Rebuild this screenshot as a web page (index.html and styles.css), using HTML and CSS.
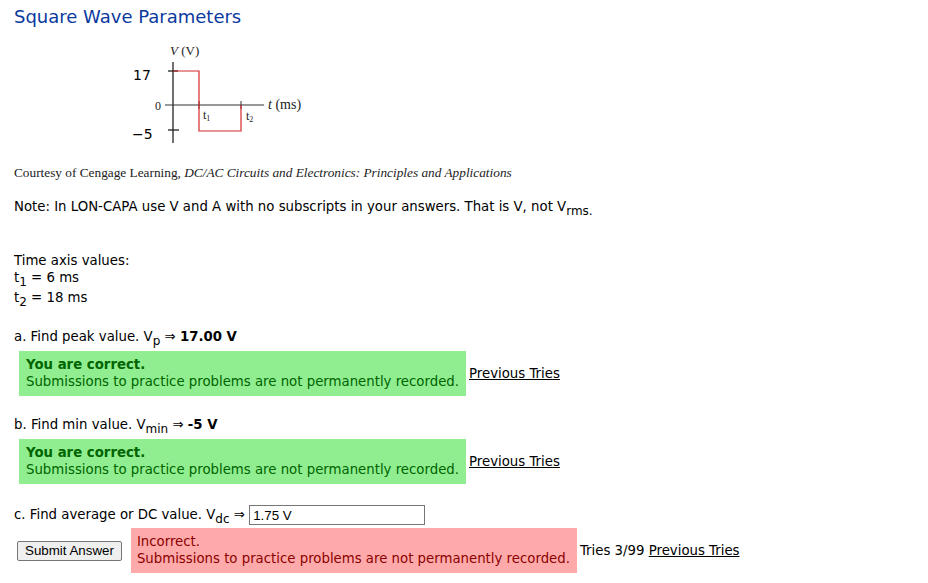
FILE: index.html
```html
<!DOCTYPE html>
<html>
<head>
<meta charset="utf-8">
<title>Square Wave Parameters</title>
<link rel="stylesheet" href="styles.css">
</head>
<body>
<h1 class="title">Square Wave Parameters</h1>
<svg class="figure" width="200" height="104" viewBox="0 0 200 104" xmlns="http://www.w3.org/2000/svg">
  <text class="serif" x="50" y="13" font-size="13"><tspan font-style="italic">V</tspan> (V)</text>
  <text class="lab" x="13" y="38">17</text>
  <text class="lab" x="12" y="97">−5</text>
  <text class="serif" x="35" y="68" font-size="12">0</text>
  <line x1="53" y1="20" x2="53" y2="101" stroke="#111" stroke-width="1.2"/>
  <line x1="48" y1="29" x2="58" y2="29" stroke="#111" stroke-width="1.2"/>
  <line x1="48" y1="88" x2="59" y2="88" stroke="#111" stroke-width="1.2"/>
  <line x1="45" y1="63" x2="144" y2="63" stroke="#333" stroke-width="1.2"/>
  <line x1="79" y1="59" x2="79" y2="67" stroke="#333" stroke-width="1"/>
  <line x1="121" y1="59" x2="121" y2="67" stroke="#333" stroke-width="1"/>
  <polyline points="53,29 79,29 79,89 121,89 121,63" fill="none" stroke="#d42a2a" stroke-width="1.2"/>
  <text class="serif" x="83" y="77" font-size="12">t<tspan font-size="8" dy="2">1</tspan></text>
  <text class="serif" x="126" y="78" font-size="12">t<tspan font-size="8" dy="2">2</tspan></text>
  <text class="serif" x="148" y="67" font-size="14"><tspan font-style="italic">t</tspan> (ms)</text>
</svg>
<p class="courtesy">Courtesy of Cengage Learning, <i>DC/AC Circuits and Electronics: Principles and Applications</i></p>
<p class="note">Note: In LON-CAPA use V and A with no subscripts in your answers. That is V, not V<sub>rms.</sub></p>

<div class="values">
  <div>Time axis values:</div>
  <div>t<sub>1</sub> = 6 ms</div>
  <div class="t2">t<sub>2</sub> = 18 ms</div>
</div>

<div class="question">a. Find peak value. V<sub>p</sub> ⇒ <b>17.00 V</b></div>
<div class="result">
  <div class="box correct"><b>You are correct.</b><br>Submissions to practice problems are not permanently recorded.</div>
  <a class="tries" href="#">Previous Tries</a>
</div>

<div class="question q2">b. Find min value. V<sub>min</sub> ⇒ <b>-5 V</b></div>
<div class="result">
  <div class="box correct"><b>You are correct.</b><br>Submissions to practice problems are not permanently recorded.</div>
  <a class="tries" href="#">Previous Tries</a>
</div>

<div class="question q3">c. Find average or DC value. V<sub>dc</sub> ⇒ <input class="answer" type="text" value="1.75 V"></div>
<div class="result last">
  <button class="submit" type="button">Submit Answer</button>
  <div class="box incorrect">Incorrect.<br>Submissions to practice problems are not permanently recorded.</div>
  <span class="tries-count">Tries 3/99 <a class="tries" href="#">Previous Tries</a></span>
</div>
</body>
</html>
```
FILE: styles.css
```css
html, body {
  margin: 0;
  padding: 0;
  background: #fff;
}
body {
  padding: 0 14px;
  font-family: "DejaVu Sans", Verdana, sans-serif;
  font-size: 13.3px;
  line-height: 17px;
  color: #000;
}
.title {
  margin: 6px 0 0 0;
  font-size: 18px;
  line-height: 22px;
  font-weight: normal;
  color: #0a3a9e;
}
.figure {
  display: block;
  margin: 14px 0 0 106px;
}
.figure .serif {
  font-family: "Liberation Serif", serif;
  fill: #222;
}
.figure .lab {
  font-family: "DejaVu Sans", sans-serif;
  font-size: 14px;
  fill: #000;
}
.courtesy {
  margin: 18px 0 0 0;
  font-family: "Liberation Serif", serif;
  font-size: 13.3px;
  color: #222;
}
.note {
  margin: 17px 0 0 0;
}
sub {
  font-size: 12px;
  line-height: 0;
}
.values {
  margin-top: 37px;
}
.values .t2 {
  margin-top: 3px;
}
.question {
  margin-top: 22px;
}
.q2 {
  margin-top: 20px;
}
.q3 {
  margin-top: 21px;
}
.result {
  display: flex;
  align-items: center;
  margin: 6px 0 0 5px;
}
.box {
  padding: 5px 7px 6px 7px;
}
.correct {
  background: #90ee90;
  color: #006400;
}
.incorrect {
  background: #ffaaaa;
  color: #8b0000;
  padding-left: 6px;
}
.tries {
  color: #000;
  text-decoration: underline;
  margin-left: 3px;
}
.tries-count {
  margin-left: 3px;
}
.tries-count .tries {
  margin-left: 0;
}
.answer {
  font-family: "Liberation Sans", Arial, sans-serif;
  font-size: 13.33px;
  width: 176px;
  height: 20px;
  box-sizing: border-box;
  border: 1px solid #767676;
  padding: 1px 3px;
  margin: 0;
  vertical-align: middle;
}
.result.last {
  margin: 3px 0 0 3px;
}
.submit {
  font-family: "Liberation Sans", Arial, sans-serif;
  font-size: 13.33px;
  height: 20px;
  padding: 0 7px;
  background: #efefef;
  border: 1px solid #767676;
  border-radius: 2px;
  margin-right: 9px;
}
```
